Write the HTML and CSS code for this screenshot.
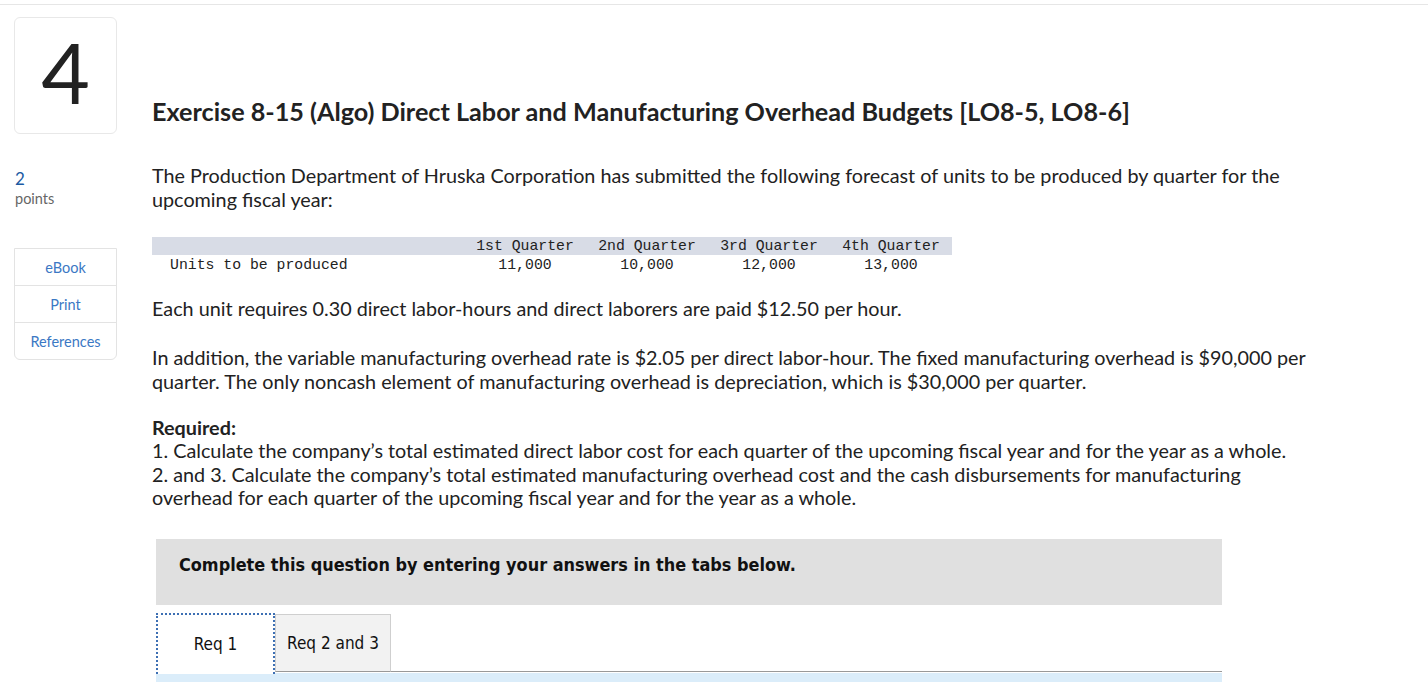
FILE: index.html
```html
<!DOCTYPE html>
<html>
<head>
<meta charset="utf-8">
<link rel="stylesheet" href="styles.css">
</head>
<body>
<div class="topline"></div>
<div class="page">
  <div class="side">
    <div class="qnum">4</div>
    <div class="points"><div class="pnum">2</div><div class="plabel">points</div></div>
    <div class="tools">
      <div class="tool">eBook</div>
      <div class="tool">Print</div>
      <div class="tool">References</div>
    </div>
  </div>
  <div class="main">
    <h1 class="title">Exercise 8-15 (Algo) Direct Labor and Manufacturing Overhead Budgets [LO8-5, LO8-6]</h1>
    <p class="para first">The Production Department of Hruska Corporation has submitted the following forecast of units to be produced by quarter for the upcoming fiscal year:</p>
    <table class="data">
      <tr class="head"><th class="lbl"></th><th>1st Quarter</th><th>2nd Quarter</th><th>3rd Quarter</th><th>4th Quarter</th></tr>
      <tr><td class="lbl">Units to be produced</td><td>11,000</td><td>10,000</td><td>12,000</td><td>13,000</td></tr>
    </table>
    <p class="para p2">Each unit requires 0.30 direct labor-hours and direct laborers are paid $12.50 per hour.</p>
    <p class="para p3">In addition, the variable manufacturing overhead rate is $2.05 per direct labor-hour. The fixed manufacturing overhead is $90,000 per quarter. The only noncash element of manufacturing overhead is depreciation, which is $30,000 per quarter.</p>
    <div class="para req"><strong>Required:</strong><br>1. Calculate the company’s total estimated direct labor cost for each quarter of the upcoming fiscal year and for the year as a whole.<br>2. and 3. Calculate the company’s total estimated manufacturing overhead cost and the cash disbursements for manufacturing overhead for each quarter of the upcoming fiscal year and for the year as a whole.</div>
    <div class="answer">
      <div class="banner">Complete this question by entering your answers in the tabs below.</div>
      <div class="tabs">
        <div class="tab active">Req 1</div>
        <div class="tab">Req 2 and 3</div>
        <div class="tabfill"></div>
      </div>
      <div class="panel"></div>
    </div>
  </div>
</div>
</body>
</html>
```

FILE: styles.css
```css
html, body { margin: 0; padding: 0; background: #fff; }
body { font-family: "Lato", "Open Sans", sans-serif; color: #222; overflow: hidden; height: 682px; }
.topline { height: 4px; border-bottom: 1px solid #e6e6e6; }
.page { display: flex; padding-left: 14px; }
.side { width: 103px; flex: none; padding-top: 12px; }
.qnum { height: 117px; border: 1px solid #e8e8e8; border-radius: 6px; display: flex; align-items: center; justify-content: center; font-family: "Lato", "Open Sans", sans-serif; font-size: 84px; color: #222; line-height: 1; padding-bottom: 8px; box-sizing: border-box; }
.points { margin-top: 35px; margin-left: 1px; }
.pnum { font-size: 17px; color: #1c5aa3; line-height: 20px; }
.plabel { font-size: 14.5px; color: #666; line-height: 18px; margin-top: 1px; }
.tools { margin-top: 40px; border: 1px solid #e3e3e3; border-radius: 0 0 6px 6px; }
.tool { height: 36px; display: flex; align-items: center; justify-content: center; font-size: 14.5px; color: #3b78c4; border-top: 1px solid #e3e3e3; }
.tool:first-child { border-top: none; }
.main { margin-left: 35px; flex: 1; }
.title { font-family: "Lato", "Open Sans", sans-serif; font-weight: 700; font-size: 25.2px; color: #222; margin: 91px 0 0 0; line-height: 30px; }
.para { font-family: "Lato", "Open Sans", sans-serif; font-size: 19.8px; line-height: 23.5px; margin: 0; color: #222; width: 1162px; }
.first { margin-top: 37px; line-height: 24px; }
.data { margin-top: 26px; border-collapse: collapse; font-family: "Liberation Mono", "DejaVu Sans Mono", monospace; font-size: 14.8px; width: 800px; }
.data th, .data td { font-weight: normal; text-align: center; padding: 0; width: 122px; color: #222; }
.data .lbl { text-align: left; width: auto; padding-left: 18px; }
.data tr.head { background: #d8dce6; height: 18px; line-height: 18px; }
.data td { line-height: 20px; }
.p2 { margin-top: 22px; }
.p3 { margin-top: 24px; line-height: 24px; }
.req { margin-top: 23px; }
.req strong { font-weight: 700; }
.answer { margin-top: 29px; margin-left: 4px; width: 1066px; }
.banner { background: #e0e0e0; height: 66px; box-sizing: border-box; padding: 15px 0 0 23px; font-family: "DejaVu Sans Condensed", "DejaVu Sans", sans-serif; font-weight: 700; font-size: 17.9px; color: #111; }
.tabs { display: flex; margin-top: 8px; height: 59px; }
.tab { width: 116px; box-sizing: border-box; display: flex; align-items: center; justify-content: center; font-family: "DejaVu Sans Condensed", "DejaVu Sans", sans-serif; font-size: 17px; color: #111; background: #f2f2f2; border: 1px solid #cfcfcf; border-bottom: 1px solid #999; margin-top: 1px; }
.tab.active { width: 119px; background: #fff; border: 2px dotted #3d6fb3; border-bottom: none; margin-top: 0; height: 61px; }
.tabfill { flex: 1; border-bottom: 1px solid #999; }
.panel { height: 10px; background: #dbedfa; margin-top: 1px; }
```
